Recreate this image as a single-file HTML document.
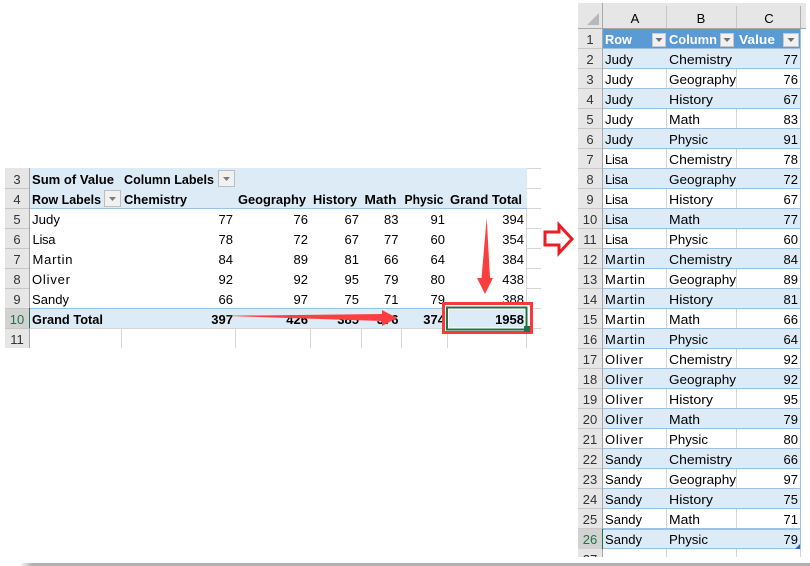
<!DOCTYPE html>
<html>
<head>
<meta charset="utf-8">
<style>
html,body{margin:0;padding:0;background:#fff;width:810px;height:566px;overflow:hidden}
svg{display:block}
text{font-family:"Liberation Sans",sans-serif;font-size:13px;fill:#000}
.b{font-weight:bold}
.r{text-anchor:end}
.h{text-anchor:middle;fill:#333}
.w{font-weight:bold;fill:#fff}
</style>
</head>
<body>
<svg width="810" height="566" viewBox="0 0 810 566" xmlns="http://www.w3.org/2000/svg">
<defs>
<linearGradient id="sh" x1="0" x2="1" y1="0" y2="0"><stop offset="0" stop-color="#b0b0b0" stop-opacity="0"/><stop offset="1" stop-color="#b0b0b0"/></linearGradient>
</defs>
<rect x="20" y="563" width="12" height="3" fill="url(#sh)"/>
<rect x="32" y="563" width="778" height="3" fill="#b0b0b0"/>

<!-- LEFT PIVOT -->
<rect x="5" y="168" width="25" height="180" fill="#e6e6e6"/>
<rect x="5" y="308" width="24" height="20" fill="#d2d2d2"/>
<g fill="#c6c6c6">
<rect x="5" y="188" width="24" height="1"/><rect x="5" y="208" width="24" height="1"/><rect x="5" y="228" width="24" height="1"/><rect x="5" y="248" width="24" height="1"/><rect x="5" y="268" width="24" height="1"/><rect x="5" y="288" width="24" height="1"/><rect x="5" y="308" width="24" height="1"/><rect x="5" y="328" width="24" height="1"/>
</g>
<rect x="29" y="168" width="1" height="180" fill="#a6a6a6"/>
<rect x="29" y="308" width="1" height="20" fill="#217346"/>
<rect x="30" y="168" width="497" height="40" fill="#ddebf7"/>
<rect x="30" y="208" width="497" height="1" fill="#9bc2e6"/>
<rect x="30" y="309" width="497" height="19" fill="#ddebf7"/>
<rect x="30" y="308" width="497" height="1" fill="#9bc2e6"/>
<g fill="#d6d6d6">
<rect x="527" y="168" width="14" height="1"/><rect x="527" y="188" width="14" height="1"/><rect x="527" y="208" width="14" height="1"/><rect x="527" y="228" width="14" height="1"/><rect x="527" y="248" width="14" height="1"/><rect x="527" y="268" width="14" height="1"/><rect x="527" y="288" width="14" height="1"/><rect x="527" y="308" width="14" height="1"/><rect x="527" y="328" width="14" height="1"/>
<rect x="526" y="209" width="1" height="139"/>
<rect x="121" y="328" width="1" height="20"/><rect x="235" y="328" width="1" height="20"/><rect x="310" y="328" width="1" height="20"/><rect x="361" y="328" width="1" height="20"/><rect x="401" y="328" width="1" height="20"/><rect x="447" y="328" width="1" height="20"/>
<rect x="30" y="328" width="497" height="1"/>
</g>

<text class="h" x="17" y="184">3</text>
<text class="h" x="17" y="204">4</text>
<text class="h" x="17" y="224">5</text>
<text class="h" x="17" y="244">6</text>
<text class="h" x="17" y="264">7</text>
<text class="h" x="17" y="284">8</text>
<text class="h" x="17" y="304">9</text>
<text class="h" x="17" y="324" style="fill:#217346">10</text>
<text class="h" x="17" y="344">11</text>

<text class="b" x="32" y="184" textLength="82" lengthAdjust="spacingAndGlyphs">Sum of Value</text>
<text class="b" x="124" y="184" textLength="90" lengthAdjust="spacingAndGlyphs">Column Labels</text>
<text class="b" x="32" y="204" textLength="69" lengthAdjust="spacingAndGlyphs">Row Labels</text>
<text class="b" x="124" y="204" textLength="63" lengthAdjust="spacingAndGlyphs">Chemistry</text>
<text class="b" x="238" y="204" textLength="68" lengthAdjust="spacingAndGlyphs">Geography</text>
<text class="b" x="313" y="204" textLength="44" lengthAdjust="spacingAndGlyphs">History</text>
<text class="b" x="364.5" y="204" textLength="32" lengthAdjust="spacingAndGlyphs">Math</text>
<text class="b" x="404.5" y="204" textLength="39" lengthAdjust="spacingAndGlyphs">Physic</text>
<text class="b" x="450" y="204" textLength="72" lengthAdjust="spacingAndGlyphs">Grand Total</text>

<!-- filter buttons left -->
<rect x="218.500" y="170.500" width="16" height="16" fill="#f1f1f1" stroke="#bdbdbd"/>
<path d="M223 177h7l-3.500 4z" fill="#7a7a7a"/>
<rect x="104.500" y="190.500" width="16" height="16" fill="#f1f1f1" stroke="#bdbdbd"/>
<path d="M109 197h7l-3.500 4z" fill="#7a7a7a"/>

<text x="32" y="224" textLength="28" lengthAdjust="spacingAndGlyphs">Judy</text>
<text x="32.500" y="244" textLength="23" lengthAdjust="spacing">Lisa</text>
<text x="32.500" y="264" textLength="40" lengthAdjust="spacing">Martin</text>
<text x="32" y="284" textLength="38" lengthAdjust="spacing">Oliver</text>
<text x="32" y="304" textLength="37" lengthAdjust="spacingAndGlyphs">Sandy</text>
<text class="b" x="32" y="324" textLength="71" lengthAdjust="spacingAndGlyphs">Grand Total</text>

<text class="r" x="233" y="224">77</text><text class="r" x="308" y="224">76</text><text class="r" x="359" y="224">67</text><text class="r" x="398.500" y="224">83</text><text class="r" x="445" y="224">91</text><text class="r" x="524" y="224">394</text>
<text class="r" x="233" y="244">78</text><text class="r" x="308" y="244">72</text><text class="r" x="359" y="244">67</text><text class="r" x="398.500" y="244">77</text><text class="r" x="445" y="244">60</text><text class="r" x="524" y="244">354</text>
<text class="r" x="233" y="264">84</text><text class="r" x="308" y="264">89</text><text class="r" x="359" y="264">81</text><text class="r" x="398.500" y="264">66</text><text class="r" x="445" y="264">64</text><text class="r" x="524" y="264">384</text>
<text class="r" x="233" y="284">92</text><text class="r" x="308" y="284">92</text><text class="r" x="359" y="284">95</text><text class="r" x="398.500" y="284">79</text><text class="r" x="445" y="284">80</text><text class="r" x="524" y="284">438</text>
<text class="r" x="233" y="304">66</text><text class="r" x="308" y="304">97</text><text class="r" x="359" y="304">75</text><text class="r" x="398.500" y="304">71</text><text class="r" x="445" y="304">79</text><text class="r" x="524" y="304">388</text>
<text class="r b" x="233" y="324">397</text><text class="r b" x="308" y="324">426</text><text class="r b" x="359" y="324">385</text><text class="r b" x="398.500" y="324">376</text><text class="r b" x="445" y="324">374</text>

<!-- selection -->
<rect x="443.500" y="303.500" width="88" height="29" fill="#fff" stroke="#f63a3a" stroke-width="3"/>
<rect x="447" y="307.500" width="79.500" height="22" fill="#ddebf7" stroke="#217346" stroke-width="2"/>
<rect x="448.500" y="309" width="76.500" height="19" fill="#ddebf7" stroke="#fff" stroke-width="1"/>
<text class="r b" x="524" y="324">1958</text>
<rect x="524" y="326" width="6" height="6" fill="#217346"/>

<!-- red arrows -->
<path d="M222 315.800L382 314V310L397 318L382 326V321Z" fill="#fb3f3f"/>
<path d="M486.700 218L490 278H493L485 294L477 278H481.500Z" fill="#fb3f3f"/>
<path d="M545 232H559V225L572 239L559 253V245H545Z" fill="#fff" stroke="#ec1c24" stroke-width="3"/>

<!-- RIGHT SHEET -->
<rect x="578" y="3" width="228" height="554" fill="#fff"/>
<rect x="578" y="3" width="228" height="25" fill="#e6e6e6"/>
<rect x="578" y="28" width="24" height="529" fill="#e6e6e6"/>
<rect x="578" y="28" width="228" height="1" fill="#a8a8a8"/>
<rect x="602" y="3" width="1" height="554" fill="#a8a8a8"/>
<rect x="666" y="6" width="1" height="22" fill="#c6c6c6"/>
<rect x="736" y="6" width="1" height="22" fill="#c6c6c6"/>
<rect x="800" y="6" width="1" height="22" fill="#b0b0b0"/>
<path d="M599 25V13L587 25Z" fill="#b8b8b8"/>
<text x="635" y="23" style="text-anchor:middle">A</text>
<text x="701" y="23" style="text-anchor:middle">B</text>
<text x="769" y="23" style="text-anchor:middle">C</text>

<rect x="603" y="29" width="197" height="20" fill="#5b9bd5"/>
<!-- bands -->
<g fill="#ddebf7">
<rect x="603" y="49" width="197" height="20"/><rect x="603" y="89" width="197" height="20"/><rect x="603" y="129" width="197" height="20"/><rect x="603" y="169" width="197" height="20"/><rect x="603" y="209" width="197" height="20"/><rect x="603" y="249" width="197" height="20"/><rect x="603" y="289" width="197" height="20"/><rect x="603" y="329" width="197" height="20"/><rect x="603" y="369" width="197" height="20"/><rect x="603" y="409" width="197" height="20"/><rect x="603" y="449" width="197" height="20"/><rect x="603" y="489" width="197" height="20"/><rect x="603" y="529" width="197" height="20"/>
</g>
<!-- vertical grid in white rows -->
<g fill="#d6d6d6">
<rect x="666" y="69" width="1" height="20"/><rect x="736" y="69" width="1" height="20"/>
<rect x="666" y="109" width="1" height="20"/><rect x="736" y="109" width="1" height="20"/>
<rect x="666" y="149" width="1" height="20"/><rect x="736" y="149" width="1" height="20"/>
<rect x="666" y="189" width="1" height="20"/><rect x="736" y="189" width="1" height="20"/>
<rect x="666" y="229" width="1" height="20"/><rect x="736" y="229" width="1" height="20"/>
<rect x="666" y="269" width="1" height="20"/><rect x="736" y="269" width="1" height="20"/>
<rect x="666" y="309" width="1" height="20"/><rect x="736" y="309" width="1" height="20"/>
<rect x="666" y="349" width="1" height="20"/><rect x="736" y="349" width="1" height="20"/>
<rect x="666" y="389" width="1" height="20"/><rect x="736" y="389" width="1" height="20"/>
<rect x="666" y="429" width="1" height="20"/><rect x="736" y="429" width="1" height="20"/>
<rect x="666" y="469" width="1" height="20"/><rect x="736" y="469" width="1" height="20"/>
<rect x="666" y="509" width="1" height="20"/><rect x="736" y="509" width="1" height="20"/>
<rect x="666" y="549" width="1" height="8"/><rect x="736" y="549" width="1" height="8"/><rect x="800" y="549" width="1" height="8"/>
</g>
<!-- blue lines -->
<g fill="#9bc2e6">
<rect x="603" y="48" width="198" height="1"/><rect x="603" y="68" width="198" height="1"/><rect x="603" y="88" width="198" height="1"/><rect x="603" y="108" width="198" height="1"/><rect x="603" y="128" width="198" height="1"/><rect x="603" y="148" width="198" height="1"/><rect x="603" y="168" width="198" height="1"/><rect x="603" y="188" width="198" height="1"/><rect x="603" y="208" width="198" height="1"/><rect x="603" y="228" width="198" height="1"/><rect x="603" y="248" width="198" height="1"/><rect x="603" y="268" width="198" height="1"/><rect x="603" y="288" width="198" height="1"/><rect x="603" y="308" width="198" height="1"/><rect x="603" y="328" width="198" height="1"/><rect x="603" y="348" width="198" height="1"/><rect x="603" y="368" width="198" height="1"/><rect x="603" y="388" width="198" height="1"/><rect x="603" y="408" width="198" height="1"/><rect x="603" y="428" width="198" height="1"/><rect x="603" y="448" width="198" height="1"/><rect x="603" y="468" width="198" height="1"/><rect x="603" y="488" width="198" height="1"/><rect x="603" y="508" width="198" height="1"/><rect x="603" y="528" width="198" height="1"/><rect x="603" y="548" width="198" height="1"/>
<rect x="800" y="29" width="1" height="520"/>
</g>
<!-- row header separators -->
<g fill="#c9c9c9">
<rect x="578" y="48" width="24" height="1"/><rect x="578" y="68" width="24" height="1"/><rect x="578" y="88" width="24" height="1"/><rect x="578" y="108" width="24" height="1"/><rect x="578" y="128" width="24" height="1"/><rect x="578" y="148" width="24" height="1"/><rect x="578" y="168" width="24" height="1"/><rect x="578" y="188" width="24" height="1"/><rect x="578" y="208" width="24" height="1"/><rect x="578" y="228" width="24" height="1"/><rect x="578" y="248" width="24" height="1"/><rect x="578" y="268" width="24" height="1"/><rect x="578" y="288" width="24" height="1"/><rect x="578" y="308" width="24" height="1"/><rect x="578" y="328" width="24" height="1"/><rect x="578" y="348" width="24" height="1"/><rect x="578" y="368" width="24" height="1"/><rect x="578" y="388" width="24" height="1"/><rect x="578" y="408" width="24" height="1"/><rect x="578" y="428" width="24" height="1"/><rect x="578" y="448" width="24" height="1"/><rect x="578" y="468" width="24" height="1"/><rect x="578" y="488" width="24" height="1"/><rect x="578" y="508" width="24" height="1"/><rect x="578" y="528" width="24" height="1"/><rect x="578" y="548" width="24" height="1"/>
</g>
<rect x="578" y="529" width="24" height="20" fill="#d2d2d2"/>
<rect x="602" y="529" width="1" height="20" fill="#217346"/>
<rect x="603" y="529" width="197" height="1" fill="#9bc2e6"/>

<!-- header cells -->
<text class="w" x="605" y="44" textLength="27" lengthAdjust="spacingAndGlyphs">Row</text>
<text class="w" x="669" y="44" textLength="48" lengthAdjust="spacingAndGlyphs">Column</text>
<text class="w" x="739" y="44" textLength="36" lengthAdjust="spacingAndGlyphs">Value</text>
<rect x="652.500" y="33.500" width="13" height="13" fill="#f1f1f1" stroke="#c8c8c8"/>
<path d="M655.500 38h7l-3.500 4z" fill="#6f6f6f"/>
<rect x="720.500" y="33.500" width="13" height="13" fill="#f1f1f1" stroke="#c8c8c8"/>
<path d="M723.500 38h7l-3.500 4z" fill="#6f6f6f"/>
<rect x="783.500" y="33.500" width="15" height="13" fill="#f1f1f1" stroke="#c8c8c8"/>
<path d="M787.500 38h7l-3.500 4z" fill="#6f6f6f"/>

<!-- row numbers -->
<text class="h" x="590" y="44">1</text><text class="h" x="590" y="64">2</text><text class="h" x="590" y="84">3</text><text class="h" x="590" y="104">4</text><text class="h" x="590" y="124">5</text><text class="h" x="590" y="144">6</text><text class="h" x="590" y="164">7</text><text class="h" x="590" y="184">8</text><text class="h" x="590" y="204">9</text><text class="h" x="590" y="224">10</text><text class="h" x="590" y="244">11</text><text class="h" x="590" y="264">12</text><text class="h" x="590" y="284">13</text><text class="h" x="590" y="304">14</text><text class="h" x="590" y="324">15</text><text class="h" x="590" y="344">16</text><text class="h" x="590" y="364">17</text><text class="h" x="590" y="384">18</text><text class="h" x="590" y="404">19</text><text class="h" x="590" y="424">20</text><text class="h" x="590" y="444">21</text><text class="h" x="590" y="464">22</text><text class="h" x="590" y="484">23</text><text class="h" x="590" y="504">24</text><text class="h" x="590" y="524">25</text><text class="h" x="590" y="544" style="fill:#217346">26</text><text class="h" x="590" y="564">27</text>
<rect x="570" y="557" width="40" height="6" fill="#fff"/>
<rect x="578" y="563" width="32" height="3" fill="#b0b0b0"/>

<!-- data rows -->
<text x="605" y="64" textLength="28" lengthAdjust="spacingAndGlyphs">Judy</text><text x="669" y="64" textLength="63" lengthAdjust="spacingAndGlyphs">Chemistry</text><text class="r" x="798" y="64">77</text>
<text x="605" y="84" textLength="28" lengthAdjust="spacingAndGlyphs">Judy</text><text x="669" y="84" textLength="67" lengthAdjust="spacingAndGlyphs">Geography</text><text class="r" x="798" y="84">76</text>
<text x="605" y="104" textLength="28" lengthAdjust="spacingAndGlyphs">Judy</text><text x="669" y="104" textLength="44" lengthAdjust="spacingAndGlyphs">History</text><text class="r" x="798" y="104">67</text>
<text x="605" y="124" textLength="28" lengthAdjust="spacingAndGlyphs">Judy</text><text x="669" y="124" textLength="31" lengthAdjust="spacingAndGlyphs">Math</text><text class="r" x="798" y="124">83</text>
<text x="605" y="144" textLength="28" lengthAdjust="spacingAndGlyphs">Judy</text><text x="669" y="144" textLength="39" lengthAdjust="spacingAndGlyphs">Physic</text><text class="r" x="798" y="144">91</text>
<text x="605" y="164" textLength="23" lengthAdjust="spacing">Lisa</text><text x="669" y="164" textLength="63" lengthAdjust="spacingAndGlyphs">Chemistry</text><text class="r" x="798" y="164">78</text>
<text x="605" y="184" textLength="23" lengthAdjust="spacing">Lisa</text><text x="669" y="184" textLength="67" lengthAdjust="spacingAndGlyphs">Geography</text><text class="r" x="798" y="184">72</text>
<text x="605" y="204" textLength="23" lengthAdjust="spacing">Lisa</text><text x="669" y="204" textLength="44" lengthAdjust="spacingAndGlyphs">History</text><text class="r" x="798" y="204">67</text>
<text x="605" y="224" textLength="23" lengthAdjust="spacing">Lisa</text><text x="669" y="224" textLength="31" lengthAdjust="spacingAndGlyphs">Math</text><text class="r" x="798" y="224">77</text>
<text x="605" y="244" textLength="23" lengthAdjust="spacing">Lisa</text><text x="669" y="244" textLength="39" lengthAdjust="spacingAndGlyphs">Physic</text><text class="r" x="798" y="244">60</text>
<text x="605" y="264" textLength="40" lengthAdjust="spacing">Martin</text><text x="669" y="264" textLength="63" lengthAdjust="spacingAndGlyphs">Chemistry</text><text class="r" x="798" y="264">84</text>
<text x="605" y="284" textLength="40" lengthAdjust="spacing">Martin</text><text x="669" y="284" textLength="67" lengthAdjust="spacingAndGlyphs">Geography</text><text class="r" x="798" y="284">89</text>
<text x="605" y="304" textLength="40" lengthAdjust="spacing">Martin</text><text x="669" y="304" textLength="44" lengthAdjust="spacingAndGlyphs">History</text><text class="r" x="798" y="304">81</text>
<text x="605" y="324" textLength="40" lengthAdjust="spacing">Martin</text><text x="669" y="324" textLength="31" lengthAdjust="spacingAndGlyphs">Math</text><text class="r" x="798" y="324">66</text>
<text x="605" y="344" textLength="40" lengthAdjust="spacing">Martin</text><text x="669" y="344" textLength="39" lengthAdjust="spacingAndGlyphs">Physic</text><text class="r" x="798" y="344">64</text>
<text x="605" y="364" textLength="38" lengthAdjust="spacing">Oliver</text><text x="669" y="364" textLength="63" lengthAdjust="spacingAndGlyphs">Chemistry</text><text class="r" x="798" y="364">92</text>
<text x="605" y="384" textLength="38" lengthAdjust="spacing">Oliver</text><text x="669" y="384" textLength="67" lengthAdjust="spacingAndGlyphs">Geography</text><text class="r" x="798" y="384">92</text>
<text x="605" y="404" textLength="38" lengthAdjust="spacing">Oliver</text><text x="669" y="404" textLength="44" lengthAdjust="spacingAndGlyphs">History</text><text class="r" x="798" y="404">95</text>
<text x="605" y="424" textLength="38" lengthAdjust="spacing">Oliver</text><text x="669" y="424" textLength="31" lengthAdjust="spacingAndGlyphs">Math</text><text class="r" x="798" y="424">79</text>
<text x="605" y="444" textLength="38" lengthAdjust="spacing">Oliver</text><text x="669" y="444" textLength="39" lengthAdjust="spacingAndGlyphs">Physic</text><text class="r" x="798" y="444">80</text>
<text x="605" y="464" textLength="37" lengthAdjust="spacingAndGlyphs">Sandy</text><text x="669" y="464" textLength="63" lengthAdjust="spacingAndGlyphs">Chemistry</text><text class="r" x="798" y="464">66</text>
<text x="605" y="484" textLength="37" lengthAdjust="spacingAndGlyphs">Sandy</text><text x="669" y="484" textLength="67" lengthAdjust="spacingAndGlyphs">Geography</text><text class="r" x="798" y="484">97</text>
<text x="605" y="504" textLength="37" lengthAdjust="spacingAndGlyphs">Sandy</text><text x="669" y="504" textLength="44" lengthAdjust="spacingAndGlyphs">History</text><text class="r" x="798" y="504">75</text>
<text x="605" y="524" textLength="37" lengthAdjust="spacingAndGlyphs">Sandy</text><text x="669" y="524" textLength="31" lengthAdjust="spacingAndGlyphs">Math</text><text class="r" x="798" y="524">71</text>
<text x="605" y="544" textLength="37" lengthAdjust="spacingAndGlyphs">Sandy</text><text x="669" y="544" textLength="39" lengthAdjust="spacingAndGlyphs">Physic</text><text class="r" x="798" y="544">79</text>
<path d="M800 544V549H795Z" fill="#3f5fa8"/>
</svg>
</body>
</html>
